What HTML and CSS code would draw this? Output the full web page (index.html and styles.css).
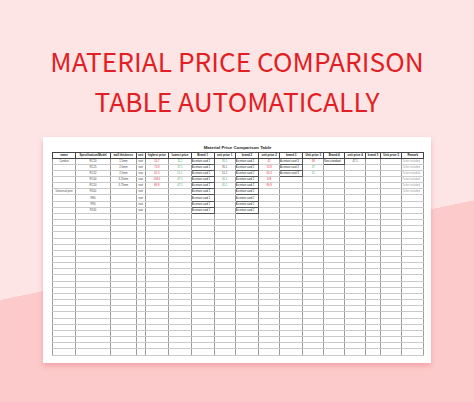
FILE: index.html
```html
<!DOCTYPE html>
<html>
<head>
<meta charset="utf-8">
<link rel="stylesheet" href="styles.css">
</head>
<body>
<div class="page">
  <h1 class="title">MATERIAL PRICE COMPARISON<br>TABLE AUTOMATICALLY</h1>
  <div class="card">
    <div class="caption">Material Price Comparison Table</div>
    <table class="sheet">
      <colgroup><col><col><col><col><col><col><col><col><col><col><col><col><col><col><col><col><col></colgroup>
      <tr class="head"><td>name</td><td>Specification/Model</td><td>wall thickness</td><td>unit</td><td>highest price</td><td>lowest price</td><td>Brand 1</td><td>unit price 1</td><td>brand 2</td><td>unit price 2</td><td>brand 3</td><td>Unit price 3</td><td>Brand 4</td><td>unit price 4</td><td>brand 5</td><td>Unit price 5</td><td>Remark</td></tr>
      <tr><td>Conduit</td><td>RC20</td><td>1.5mm</td><td>root</td><td class="red">16.7</td><td class="green">11.1</td><td class="brand">A certain card 1</td><td class="green">35.1</td><td class="brand">A certain card 2</td><td class="red">41</td><td class="brand">A certain card 3</td><td class="red">48</td><td class="brand">Non-standard</td><td>47.1</td><td></td><td></td><td class="note">Ticket included</td></tr>
      <tr><td></td><td>RC25</td><td>2.0mm</td><td>root</td><td class="red">74.8</td><td class="green">37.1</td><td class="brand">A certain card 1</td><td>35.1</td><td class="brand">A certain card 2</td><td class="red">74.8</td><td class="brand">A certain card 3</td><td class="green">37</td><td></td><td></td><td></td><td></td><td class="note">Ticket included</td></tr>
      <tr><td></td><td>RC32</td><td>2.5mm</td><td>root</td><td class="red">65.3</td><td class="green">51.1</td><td class="brand">A certain card 1</td><td>51.2</td><td class="brand">A certain card 2</td><td class="red">66.3</td><td class="brand">A certain card 3</td><td class="green">51</td><td></td><td></td><td></td><td></td><td class="note">Ticket included</td></tr>
      <tr><td></td><td>RC40</td><td>3.25mm</td><td>root</td><td class="red">108.6</td><td class="green">47.1</td><td class="brand">A certain card 1</td><td class="green">45.1</td><td class="brand">A certain card 2</td><td class="red">108</td><td></td><td></td><td></td><td></td><td></td><td></td><td class="note">Ticket included</td></tr>
      <tr><td></td><td>RC50</td><td>3.75mm</td><td>root</td><td class="red">86.8</td><td class="green">47.1</td><td class="brand">A certain card 1</td><td class="green">45.1</td><td class="brand">A certain card 2</td><td class="red">86.8</td><td></td><td></td><td></td><td></td><td></td><td></td><td class="note">Ticket included</td></tr>
      <tr><td>Universal joint</td><td>R100</td><td></td><td>root</td><td></td><td></td><td class="brand">A certain card 1</td><td></td><td class="brand">A certain card 2</td><td></td><td></td><td></td><td></td><td></td><td></td><td></td><td class="note">Ticket included</td></tr>
      <tr><td></td><td>R80</td><td></td><td>root</td><td></td><td></td><td class="brand">A certain card 1</td><td></td><td class="brand">A certain card 2</td><td></td><td></td><td></td><td></td><td></td><td></td><td></td><td></td></tr>
      <tr><td></td><td>R90</td><td></td><td>root</td><td></td><td></td><td class="brand">A certain card 1</td><td></td><td class="brand">A certain card 2</td><td></td><td></td><td></td><td></td><td></td><td></td><td></td><td></td></tr>
      <tr><td></td><td>R130</td><td></td><td>root</td><td></td><td></td><td class="brand">A certain card 1</td><td></td><td class="brand">A certain card 2</td><td></td><td></td><td></td><td></td><td></td><td></td><td></td><td></td></tr>
      <tr><td></td><td></td><td></td><td></td><td></td><td></td><td></td><td></td><td></td><td></td><td></td><td></td><td></td><td></td><td></td><td></td><td></td></tr>
      <tr><td></td><td></td><td></td><td></td><td></td><td></td><td></td><td></td><td></td><td></td><td></td><td></td><td></td><td></td><td></td><td></td><td></td></tr>
      <tr><td></td><td></td><td></td><td></td><td></td><td></td><td></td><td></td><td></td><td></td><td></td><td></td><td></td><td></td><td></td><td></td><td></td></tr>
      <tr><td></td><td></td><td></td><td></td><td></td><td></td><td></td><td></td><td></td><td></td><td></td><td></td><td></td><td></td><td></td><td></td><td></td></tr>
      <tr><td></td><td></td><td></td><td></td><td></td><td></td><td></td><td></td><td></td><td></td><td></td><td></td><td></td><td></td><td></td><td></td><td></td></tr>
      <tr><td></td><td></td><td></td><td></td><td></td><td></td><td></td><td></td><td></td><td></td><td></td><td></td><td></td><td></td><td></td><td></td><td></td></tr>
      <tr><td></td><td></td><td></td><td></td><td></td><td></td><td></td><td></td><td></td><td></td><td></td><td></td><td></td><td></td><td></td><td></td><td></td></tr>
      <tr><td></td><td></td><td></td><td></td><td></td><td></td><td></td><td></td><td></td><td></td><td></td><td></td><td></td><td></td><td></td><td></td><td></td></tr>
      <tr><td></td><td></td><td></td><td></td><td></td><td></td><td></td><td></td><td></td><td></td><td></td><td></td><td></td><td></td><td></td><td></td><td></td></tr>
      <tr><td></td><td></td><td></td><td></td><td></td><td></td><td></td><td></td><td></td><td></td><td></td><td></td><td></td><td></td><td></td><td></td><td></td></tr>
      <tr><td></td><td></td><td></td><td></td><td></td><td></td><td></td><td></td><td></td><td></td><td></td><td></td><td></td><td></td><td></td><td></td><td></td></tr>
      <tr><td></td><td></td><td></td><td></td><td></td><td></td><td></td><td></td><td></td><td></td><td></td><td></td><td></td><td></td><td></td><td></td><td></td></tr>
      <tr><td></td><td></td><td></td><td></td><td></td><td></td><td></td><td></td><td></td><td></td><td></td><td></td><td></td><td></td><td></td><td></td><td></td></tr>
      <tr><td></td><td></td><td></td><td></td><td></td><td></td><td></td><td></td><td></td><td></td><td></td><td></td><td></td><td></td><td></td><td></td><td></td></tr>
      <tr><td></td><td></td><td></td><td></td><td></td><td></td><td></td><td></td><td></td><td></td><td></td><td></td><td></td><td></td><td></td><td></td><td></td></tr>
      <tr><td></td><td></td><td></td><td></td><td></td><td></td><td></td><td></td><td></td><td></td><td></td><td></td><td></td><td></td><td></td><td></td><td></td></tr>
      <tr><td></td><td></td><td></td><td></td><td></td><td></td><td></td><td></td><td></td><td></td><td></td><td></td><td></td><td></td><td></td><td></td><td></td></tr>
      <tr><td></td><td></td><td></td><td></td><td></td><td></td><td></td><td></td><td></td><td></td><td></td><td></td><td></td><td></td><td></td><td></td><td></td></tr>
      <tr><td></td><td></td><td></td><td></td><td></td><td></td><td></td><td></td><td></td><td></td><td></td><td></td><td></td><td></td><td></td><td></td><td></td></tr>
      <tr><td></td><td></td><td></td><td></td><td></td><td></td><td></td><td></td><td></td><td></td><td></td><td></td><td></td><td></td><td></td><td></td><td></td></tr>
      <tr><td></td><td></td><td></td><td></td><td></td><td></td><td></td><td></td><td></td><td></td><td></td><td></td><td></td><td></td><td></td><td></td><td></td></tr>
      <tr><td></td><td></td><td></td><td></td><td></td><td></td><td></td><td></td><td></td><td></td><td></td><td></td><td></td><td></td><td></td><td></td><td></td></tr>
      <tr><td></td><td></td><td></td><td></td><td></td><td></td><td></td><td></td><td></td><td></td><td></td><td></td><td></td><td></td><td></td><td></td><td></td></tr>
    </table>
  </div>
</div>
</body>
</html>
```
FILE: styles.css
```css
html, body {
  margin: 0;
  padding: 0;
}
body {
  width: 474px;
  height: 402px;
  overflow: hidden;
  background: linear-gradient(168.1deg, #fde5e5 59.8%, #fccaca 59.8%);
}
.page {
  display: flex;
  flex-direction: column;
  align-items: center;
  padding-top: 41px;
}
.title {
  margin: 0;
  font-family: "Noto Sans CJK SC", "Noto Sans", sans-serif;
  font-weight: 400;
  font-size: 26.3px;
  line-height: 40px;
  color: #e31e24;
  text-align: center;
  letter-spacing: 0;
}
.card {
  margin-top: 16px;
  width: 388px;
  height: 226px;
  box-sizing: border-box;
  padding: 7px 8px 8px 9px;
  background: #fff;
  box-shadow: 0 3px 5px rgba(232, 120, 132, 0.45);
}
.caption {
  height: 8px;
  line-height: 8px;
  text-align: center;
  font-family: "Liberation Sans", Arial, sans-serif;
  font-weight: 700;
  font-size: 4.4px;
  color: #222;
}
.sheet {
  width: 371px;
  table-layout: fixed;
  border-collapse: collapse;
  font-family: "Liberation Sans", Arial, sans-serif;
  font-size: 2.7px;
  color: #444;
}
.sheet col:nth-child(1) { width: 23px; }
.sheet col:nth-child(2) { width: 35px; }
.sheet col:nth-child(3) { width: 25.7px; }
.sheet col:nth-child(4) { width: 9px; }
.sheet col:nth-child(5) { width: 23.6px; }
.sheet col:nth-child(6) { width: 22.4px; }
.sheet col:nth-child(7) { width: 23px; }
.sheet col:nth-child(8) { width: 21px; }
.sheet col:nth-child(9) { width: 23.6px; }
.sheet col:nth-child(10) { width: 20.7px; }
.sheet col:nth-child(11) { width: 23.3px; }
.sheet col:nth-child(12) { width: 21px; }
.sheet col:nth-child(13) { width: 21px; }
.sheet col:nth-child(14) { width: 20.7px; }
.sheet col:nth-child(15) { width: 15.3px; }
.sheet col:nth-child(16) { width: 21px; }
.sheet col:nth-child(17) { width: 22px; }
.sheet tr {
  height: 6.17px;
}
.sheet td {
  padding: 0;
  height: 5px;
  line-height: 5px;
  border-top: 1px solid #c9c9c9;
  border-bottom: 1px solid #c9c9c9;
  border-left: 1px solid #9c9c9c;
  border-right: 1px solid #9c9c9c;
  text-align: center;
  white-space: nowrap;
  overflow: hidden;
}
.sheet td:nth-child(7),
.sheet td:nth-child(9),
.sheet td:nth-child(11),
.sheet td:nth-child(13),
.sheet td:nth-child(15),
.sheet td:nth-child(17) {
  border-left-color: #666;
}
.sheet tr.head {
  height: 5.5px;
}
.sheet tr.head td {
  font-weight: 700;
  font-size: 2.9px;
  color: #222;
  line-height: 4px;
  height: 4px;
  border: 1px solid #444;
}
.sheet td.brand {
  text-align: left;
  color: #222;
  border-color: #555;
}
.sheet td.red {
  color: #e8304a;
}
.sheet td.green {
  color: #3aa86a;
}
.sheet td.note {
  text-align: left;
  color: #999;
}
```
